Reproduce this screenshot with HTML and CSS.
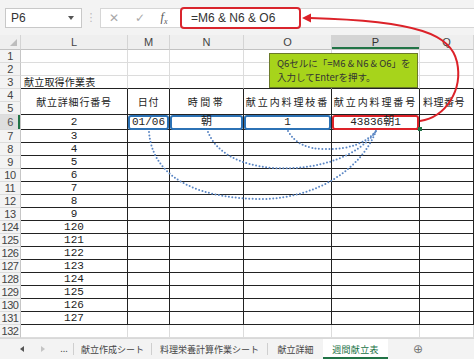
FILE: index.html
```html
<!DOCTYPE html>
<html lang="ja">
<head>
    <meta charset="UTF-8">
    <meta name="viewport" content="width=device-width, initial-scale=1.0">
    <title>週間献立表</title>
    <link rel="stylesheet" href="styles.css">
</head>
<body>
<div class="app">
    <div class="ribbon">
        <div class="namebox"><span>P6</span><span class="caret"></span></div>
        <div class="grip">⋮</div>
        <div class="fbar">
            <span class="fbtn">✕</span>
            <span class="fbtn">✓</span>
            <span class="fbtn fx">f<sub>x</sub></span>
            <div class="formula">=M6 &amp; N6 &amp; O6</div>
        </div>
    </div>

    <table class="grid">
        <colgroup>
            <col class="w-rh"><col class="w-l"><col class="w-m"><col class="w-n"><col class="w-o"><col class="w-p"><col class="w-q">
        </colgroup>
        <tr class="colhead">
            <th class="corner"><span class="tri"></span></th>
            <th>L</th><th>M</th><th>N</th><th>O</th><th class="sel">P</th><th>Q</th>
        </tr>
        <tr><th class="rh">1</th><td></td><td></td><td></td><td></td><td></td><td></td></tr>
        <tr><th class="rh">2</th><td></td><td></td><td></td><td></td><td></td><td></td></tr>
        <tr><th class="rh">3</th><td class="edge title">献立取得作業表</td><td class="edge"></td><td class="edge"></td><td class="edge"></td><td class="edge"></td><td class="edge"></td></tr>
        <tr>
            <th class="rh">4</th>
            <td class="t hd" rowspan="2">献立詳細行番号</td>
            <td class="t hd" rowspan="2">日付</td>
            <td class="t hd hd-n" rowspan="2">時間帯</td>
            <td class="t hd hd-wide" rowspan="2">献立内料理枝番</td>
            <td class="t hd hd-wide" rowspan="2">献立内料理番号</td>
            <td class="t hd hd-q" rowspan="2">料理番号</td>
        </tr>
        <tr><th class="rh">5</th></tr>
        <tr class="r6">
            <th class="rh cur">6</th>
            <td class="t num">2</td>
            <td class="t"><span class="box blue">01/06</span></td>
            <td class="t"><span class="box blue">朝</span></td>
            <td class="t"><span class="box blue">1</span></td>
            <td class="t active"><span class="box red">43836朝1</span></td>
            <td class="t"></td>
        </tr>
        <tr><th class="rh">7</th><td class="t num">3</td><td class="t"></td><td class="t"></td><td class="t"></td><td class="t"></td><td class="t"></td></tr>
        <tr><th class="rh">8</th><td class="t num">4</td><td class="t"></td><td class="t"></td><td class="t"></td><td class="t"></td><td class="t"></td></tr>
        <tr><th class="rh">9</th><td class="t num">5</td><td class="t"></td><td class="t"></td><td class="t"></td><td class="t"></td><td class="t"></td></tr>
        <tr><th class="rh">10</th><td class="t num">6</td><td class="t"></td><td class="t"></td><td class="t"></td><td class="t"></td><td class="t"></td></tr>
        <tr><th class="rh">11</th><td class="t num">7</td><td class="t"></td><td class="t"></td><td class="t"></td><td class="t"></td><td class="t"></td></tr>
        <tr><th class="rh">12</th><td class="t num">8</td><td class="t"></td><td class="t"></td><td class="t"></td><td class="t"></td><td class="t"></td></tr>
        <tr><th class="rh">13</th><td class="t num">9</td><td class="t"></td><td class="t"></td><td class="t"></td><td class="t"></td><td class="t"></td></tr>
        <tr><th class="rh">124</th><td class="t num">120</td><td class="t"></td><td class="t"></td><td class="t"></td><td class="t"></td><td class="t"></td></tr>
        <tr><th class="rh">125</th><td class="t num">121</td><td class="t"></td><td class="t"></td><td class="t"></td><td class="t"></td><td class="t"></td></tr>
        <tr><th class="rh">126</th><td class="t num">122</td><td class="t"></td><td class="t"></td><td class="t"></td><td class="t"></td><td class="t"></td></tr>
        <tr><th class="rh">127</th><td class="t num">123</td><td class="t"></td><td class="t"></td><td class="t"></td><td class="t"></td><td class="t"></td></tr>
        <tr><th class="rh">128</th><td class="t num">124</td><td class="t"></td><td class="t"></td><td class="t"></td><td class="t"></td><td class="t"></td></tr>
        <tr><th class="rh">129</th><td class="t num">125</td><td class="t"></td><td class="t"></td><td class="t"></td><td class="t"></td><td class="t"></td></tr>
        <tr><th class="rh">130</th><td class="t num">126</td><td class="t"></td><td class="t"></td><td class="t"></td><td class="t"></td><td class="t"></td></tr>
        <tr><th class="rh">131</th><td class="t num">127</td><td class="t"></td><td class="t"></td><td class="t"></td><td class="t"></td><td class="t"></td></tr>
        <tr><th class="rh">132</th><td></td><td></td><td></td><td></td><td></td><td></td></tr>
    </table>

    <div class="tabs">
        <div class="nav">
            <span class="arrow left"></span>
            <span class="arrow right"></span>
            <span class="more">...</span>
        </div>
        <div class="tab t1">献立作成シート</div>
        <div class="tab t2">料理栄養計算作業シート</div>
        <div class="tab t3">献立詳細</div>
        <div class="tab current">週間献立表</div>
        <div class="add">⊕</div>
    </div>

    <!-- annotations drawn over the sheet -->
    <div class="callout">Q6セルに「=M6 &amp; N6 &amp; O6」を<br>入力してEnterを押す。</div>
    <svg class="marks" width="474" height="359" viewBox="0 0 474 359">
        <g class="dots">
            <path d="M149,132 C153,182 205,199 263,199 C318,198 362,168 376,131"/>
            <path d="M208,132 C216,152 238,165 273,168 C320,171 360,155 376,131"/>
            <path d="M288,131 C295,143 306,149 325,149 C350,150 367,142 376,131"/>
        </g>
        <path class="pointer" d="M420,121 C446,117 463,90 457,62 C451,35 420,21 310,18"/>
        <polygon class="head" points="302,18 311,13.5 311,22.5"/>
    </svg>
</div>
</body>
</html>
```

FILE: styles.css
```css
body {
    margin: 0;
    font-family: "Liberation Sans", "Noto Sans CJK JP", sans-serif;
    background-color: #ffffff;
    overflow: hidden;
}
.app {
    position: relative;
    width: 474px;
    height: 359px;
    overflow: hidden;
}

/* formula bar */
.ribbon {
    height: 35px;
    box-sizing: border-box;
    padding-top: 8px;
    background-color: #f3f3f3;
    display: flex;
    align-items: flex-start;
}
.namebox {
    margin-left: 5px;
    width: 77px;
    height: 20px;
    box-sizing: border-box;
    padding: 0 7px 0 5px;
    border: 1px solid #c8c8c8;
    background-color: #ffffff;
    display: flex;
    align-items: center;
    justify-content: space-between;
    font-size: 12px;
    color: #333333;
}
.caret {
    width: 0;
    height: 0;
    border-left: 3px solid transparent;
    border-right: 3px solid transparent;
    border-top: 4px solid #555555;
}
.grip {
    width: 18px;
    text-align: center;
    line-height: 20px;
    font-size: 11px;
    color: #b8b8b8;
    font-family: "DejaVu Sans", sans-serif;
}
.fbar {
    flex: 1;
    height: 20px;
    box-sizing: border-box;
    border: 1px solid #d6d6d6;
    border-right: none;
    background-color: #ffffff;
    display: flex;
    align-items: center;
}
.fbtn {
    width: 26px;
    text-align: center;
    font-size: 12px;
    color: #a8a8a8;
    font-family: "DejaVu Sans", sans-serif;
}
.fbtn.fx {
    width: 22px;
    font-family: "Liberation Serif", serif;
    font-style: italic;
    font-size: 12px;
    color: #555555;
}
.fbtn.fx sub {
    font-size: 8px;
}
.formula {
    margin-left: 5px;
    width: 121px;
    height: 22px;
    box-sizing: border-box;
    padding-left: 9px;
    border: 2px solid #d9252d;
    border-radius: 4px;
    font-size: 12px;
    line-height: 18px;
    color: #333333;
}

/* sheet grid */
.grid {
    width: 474px;
    table-layout: fixed;
    border-collapse: separate;
    border-spacing: 0;
}
.w-rh { width: 21px; }
.w-l { width: 107px; }
.w-m { width: 42px; }
.w-n { width: 74px; }
.w-o { width: 88px; }
.w-p { width: 88px; }
.w-q { width: 54px; }
.grid tr {
    height: 13px;
}
.grid td, .grid th {
    padding: 0;
    height: 13px;
    line-height: 12px;
    box-sizing: border-box;
    border-right: 1px solid #dcdcdc;
    border-bottom: 1px solid #dcdcdc;
    white-space: nowrap;
}
.colhead th {
    height: 15px;
    background-color: #efefef;
    border-right-color: #d4d4d4;
    border-bottom-color: #c2c2c2;
    font-weight: normal;
    font-size: 11px;
    color: #444444;
}
.colhead th.sel {
    background-color: #d4d4d4;
    box-shadow: inset 0 -2px #217346;
    color: #333333;
}
.corner {
    position: relative;
}
.tri {
    position: absolute;
    right: 3px;
    bottom: 3px;
    width: 0;
    height: 0;
    border-left: 7px solid transparent;
    border-bottom: 7px solid #bdbdbd;
}
.rh {
    background-color: #f3f3f3;
    border-right-color: #c6c6c6 !important;
    font-weight: normal;
    font-size: 11px;
    letter-spacing: -0.4px;
    color: #444444;
}
.rh.cur {
    background-color: #dedede;
    box-shadow: inset -2px 0 #217346;
    color: #555555;
}
.edge {
    border-bottom-color: #222222 !important;
}
.title {
    padding-left: 3px !important;
    font-family: "Noto Sans CJK JP", sans-serif;
    font-size: 10px;
    letter-spacing: 0.2px;
    color: #222222;
}
.t {
    border-right-color: #222222 !important;
    border-bottom-color: #222222 !important;
    font-family: "Noto Sans CJK JP", sans-serif;
    font-size: 10px;
    text-align: center;
    color: #222222;
}
.hd {
    letter-spacing: 0.8px;
}
.hd-n {
    letter-spacing: 2.5px;
}
.hd-wide {
    letter-spacing: 1.9px;
}
.hd-q {
    text-align: left;
    padding-left: 3px !important;
    letter-spacing: 0.5px;
}
.num {
    font-family: "Liberation Mono", "Noto Sans CJK JP", monospace;
    font-size: 11px;
}
.r6 {
    height: 15px;
}
.r6 td, .r6 th {
    height: 15px;
}
.box {
    display: block;
    height: 15px;
    margin: -1px 0 -1px 0;
    box-sizing: border-box;
    border: 2px solid;
    border-radius: 3px;
    line-height: 11px;
    font-family: "Liberation Mono", "Noto Sans CJK JP", monospace;
    font-size: 11px;
}
.box.blue {
    border-color: #2c72b5;
}
.box.red {
    border-color: #dc2229;
}
.active {
    position: relative;
}
.active::after {
    content: "";
    position: absolute;
    right: -3px;
    bottom: -2px;
    width: 4px;
    height: 4px;
    background-color: #217346;
}

/* sheet tabs */
.tabs {
    height: 21px;
    box-sizing: border-box;
    border-top: 1px solid #d8d8d8;
    background-color: #f3f3f3;
    display: flex;
    align-items: stretch;
    font-family: "Noto Sans CJK JP", sans-serif;
    font-size: 9px;
    color: #444444;
}
.nav {
    width: 74px;
    box-sizing: border-box;
    padding-left: 15px;
    display: flex;
    align-items: center;
    gap: 7px;
    border-right: 1px solid #cfcfcf;
    margin: 4px 0;
}
.arrow {
    width: 14px;
    height: 6px;
    position: relative;
}
.arrow::before {
    content: "";
    position: absolute;
    top: 0;
    left: 5px;
    border-top: 3px solid transparent;
    border-bottom: 3px solid transparent;
}
.arrow.left::before {
    border-right: 4px solid #555555;
}
.arrow.right::before {
    border-left: 4px solid #c4c4c4;
}
.more {
    width: 14px;
    text-align: center;
    color: #555555;
    line-height: 10px;
}
.tab {
    display: flex;
    align-items: center;
    justify-content: center;
    box-sizing: border-box;
}
.t1, .t2 {
    border-right: 1px solid #cfcfcf;
    margin: 4px 0;
}
.t1 { width: 78px; }
.t2 { width: 116px; }
.t3 { width: 55px; }
.current {
    width: 65px;
    background-color: #ffffff;
    color: #217346;
    box-shadow: inset 0 -2px #217346;
    letter-spacing: 0.3px;
}
.add {
    width: 60px;
    display: flex;
    align-items: center;
    justify-content: center;
    font-family: "DejaVu Sans", sans-serif;
    font-size: 12px;
    color: #777777;
}

/* annotations */
.callout {
    position: absolute;
    left: 269px;
    top: 53px;
    width: 149px;
    height: 35px;
    box-sizing: border-box;
    padding: 2px 0 0 7px;
    border: 1px solid #6b7a2a;
    background-color: #a7d41b;
    font-family: "Noto Sans CJK JP", sans-serif;
    font-size: 9.5px;
    line-height: 14px;
    color: #333333;
    white-space: nowrap;
}
.marks {
    position: absolute;
    left: 0;
    top: 0;
    pointer-events: none;
}
.dots path {
    fill: none;
    stroke: #5a86c4;
    stroke-width: 2;
    stroke-linecap: round;
    stroke-dasharray: 0 3.4;
}
.pointer {
    fill: none;
    stroke: #dc2229;
    stroke-width: 2;
}
.head {
    fill: #dc2229;
}
```
